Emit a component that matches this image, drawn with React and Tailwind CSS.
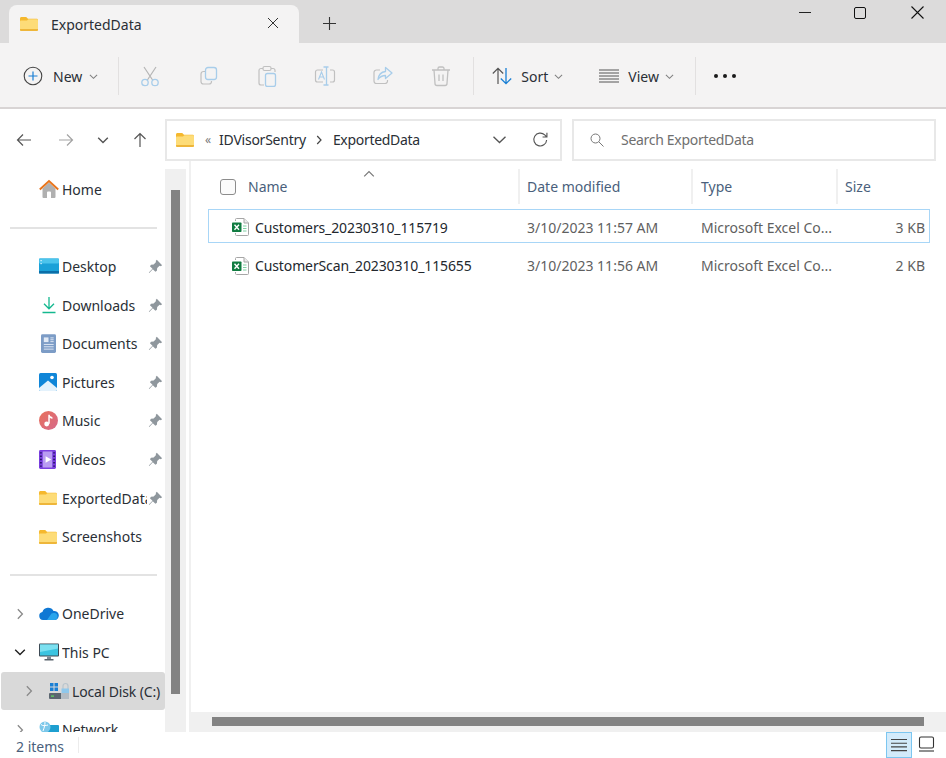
import React from "react";

const Folder = ({ className = "w-[18px] h-[18px]" }) => (
  <svg viewBox="0 0 18 16" className={className}>
    <path d="M0 2.500C0 1.600.6 1 1.500 1h4.200c.4 0 .7.1 1 .4L8 2.800h8.500c.9 0 1.500.6 1.500 1.500v9.200c0 .9-.6 1.500-1.500 1.500h-15C.6 15 0 14.400 0 13.500z" fill="#f5b82e" />
    <path d="M0 5.500C0 4.900.5 4.400 1 4.400h6l1.400-1.200h8.100c.9 0 1.500.6 1.500 1.500v8.800c0 .9-.6 1.500-1.500 1.500h-15C.6 15 0 14.400 0 13.500z" fill="#fddc78" />
    <path d="M0 13.500c0 .9.6 1.500 1.500 1.500h15c.9 0 1.500-.6 1.500-1.500V13H0z" fill="#eeb63a" />
  </svg>
);

const Chevron = ({ size = 10, color = "#808080", dir = "down", width = 1.2 }) => {
  const d = { down: "M1 3.200 5 7l4-3.800", right: "M3.200 1 7 5l-3.800 4", up: "M1 7l4-4 4 4" }[dir];
  return (
    <svg viewBox="0 0 10 10" width={size} height={size} className="shrink-0">
      <path d={d} fill="none" stroke={color} strokeWidth={width} />
    </svg>
  );
};

const Stroke = ({ size = 22, children, className = "shrink-0" }) => (
  <svg viewBox="0 0 22 22" width={size} height={size} className={className} fill="none">
    {children}
  </svg>
);

const CutIcon = () => (
  <Stroke>
    <path d="M5 2l8.600 13M17 2 8.400 15" stroke="#b5b5b5" strokeWidth="1.200" />
    <circle cx="6" cy="17.500" r="3.200" stroke="#a8cdea" strokeWidth="1.300" />
    <circle cx="16" cy="17.500" r="3.200" stroke="#a8cdea" strokeWidth="1.300" />
  </Stroke>
);

const CopyIcon = () => (
  <Stroke>
    <rect x="7.500" y="2.500" width="11" height="12" rx="2.500" stroke="#a8cdea" strokeWidth="1.300" />
    <path d="M7 6.500H5.500a2.500 2.500 0 0 0-2.500 2.500v7.500a2.500 2.500 0 0 0 2.500 2.500H11a2.500 2.500 0 0 0 2.500-2.500V16" stroke="#c0c0c0" strokeWidth="1.200" />
  </Stroke>
);

const PasteIcon = () => (
  <Stroke>
    <path d="M7 3.500H5a2 2 0 0 0-2 2V18a2 2 0 0 0 2 2h3M15 3.500h2a2 2 0 0 1 2 2V7" stroke="#c0c0c0" strokeWidth="1.200" />
    <rect x="7" y="1.500" width="8" height="4" rx="1.500" stroke="#c0c0c0" strokeWidth="1.200" />
    <rect x="9.500" y="8.500" width="10" height="13" rx="2" stroke="#a8cdea" strokeWidth="1.300" />
  </Stroke>
);

const RenameIcon = () => (
  <Stroke>
    <path d="M9 5H3.500A2 2 0 0 0 1.500 7v8a2 2 0 0 0 2 2H9M16 5h2.500a2 2 0 0 1 2 2v8a2 2 0 0 1-2 2H16" stroke="#c0c0c0" strokeWidth="1.200" />
    <path d="M9.500 2h5M9.500 20h5M12.500 2v18" stroke="#a8cdea" strokeWidth="1.300" />
    <path d="M4.500 14.500 7.500 7l3 7.500M5.500 12h4" stroke="#a8cdea" strokeWidth="1.100" />
  </Stroke>
);

const ShareIcon = () => (
  <Stroke>
    <path d="M8 5H4.500a2.500 2.500 0 0 0-2.500 2.500V16a2.500 2.500 0 0 0 2.500 2.500H13a2.500 2.500 0 0 0 2.500-2.500v-1" stroke="#c0c0c0" strokeWidth="1.200" />
    <path d="M13.500 2.500 20 8l-6.500 5.500V10.500c-3.500 0-5.500 1-7.500 4 .5-4.500 3-7.500 7.500-8z" stroke="#a8cdea" strokeWidth="1.300" strokeLinejoin="round" />
  </Stroke>
);

const TrashIcon = () => (
  <Stroke>
    <path d="M2 5h18M8 5V3.500A1.500 1.500 0 0 1 9.500 2h3A1.500 1.500 0 0 1 14 3.500V5M4 5l1 13.500a2 2 0 0 0 2 2h8a2 2 0 0 0 2-2L18 5M9 9.500v6.500M13 9.500v6.500" stroke="#c0c0c0" strokeWidth="1.300" />
  </Stroke>
);

const ToolbarBtn = ({ children, w = "w-[58px]" }) => (
  <div className={`flex items-center justify-center shrink-0 ${w}`}>{children}</div>
);

const Sep = ({ className = "" }) => <div className={`w-px h-[38px] bg-[#e2e0e0] shrink-0 ${className}`} />;

const HomeIcon = () => (
  <svg viewBox="0 0 20 20" width="20" height="20">
    <path d="M3.500 9.500V18a1 1 0 0 0 1 1h3.500v-5.500a1 1 0 0 1 1-1h2a1 1 0 0 1 1 1V19h3.500a1 1 0 0 0 1-1V9.500L10 3.500z" fill="#b0b0b0" />
    <path d="M.8 10.500 10 2l9.200 8.500" fill="none" stroke="#e8751c" strokeWidth="2" />
  </svg>
);

const DesktopIcon = () => (
  <svg viewBox="0 0 20 16" width="20" height="16">
    <rect x="0" y="0.500" width="20" height="15" rx="1" fill="#1ba1d8" />
    <rect x="0" y="0.500" width="20" height="5" rx="1" fill="#4cc4ec" />
    <rect x="0" y="13" width="20" height="2.500" fill="#0c6fa8" />
    <rect x="1.500" y="2" width="1.200" height="1.200" fill="#e6f7ff" />
    <rect x="1.500" y="5" width="1.200" height="1.200" fill="#e6f7ff" />
  </svg>
);

const DownloadIcon = () => (
  <svg viewBox="0 0 16 18" width="16" height="18">
    <path d="M8 1v11.500M3 7.800l5 5 5-5" fill="none" stroke="#14b88f" strokeWidth="1.300" />
    <path d="M1.500 16.500h13" stroke="#14b88f" strokeWidth="1.500" />
  </svg>
);

const DocsIcon = () => (
  <svg viewBox="0 0 16 20" width="15" height="19">
    <rect width="16" height="20" rx="1.500" fill="#7c9cc6" />
    <rect x="3" y="3.500" width="5" height="5" fill="#e2eaf5" />
    <path d="M10 4h3.500M10 6h3.500M10 8h3.500M3 11h10.500M3 13.500h10.500M3 16h10.500" stroke="#e2eaf5" strokeWidth="1" />
  </svg>
);

const PicturesIcon = () => (
  <svg viewBox="0 0 18 18" width="18" height="18">
    <rect width="18" height="18" rx="1.500" fill="#1086d8" />
    <path d="M0 15 9 7.500l9 7.500v1.500a1.500 1.500 0 0 1-1.500 1.500h-15A1.500 1.500 0 0 1 0 16.500z" fill="#e4f2fc" />
    <circle cx="13" cy="4.500" r="1.800" fill="#ffffff" />
  </svg>
);

const MusicIcon = () => (
  <svg viewBox="0 0 18 18" width="19" height="19">
    <defs>
      <linearGradient id="musicFill" x1="0" y1="0" x2="1" y2="1">
        <stop offset="0" stopColor="#e8705a" />
        <stop offset="1" stopColor="#d66a8c" />
      </linearGradient>
    </defs>
    <circle cx="9" cy="9" r="9" fill="url(#musicFill)" />
    <path d="M9.500 3.500v8.500" stroke="#fff" strokeWidth="1.400" />
    <path d="M9.500 3.500c1 1.600 2.500 1.800 3.200 2.200v1.900c-1.200-.3-2.400-.9-3.200-1.600z" fill="#fff" />
    <circle cx="7.300" cy="12.300" r="2.300" fill="#fff" />
  </svg>
);

const VideosIcon = () => (
  <svg viewBox="0 0 18 20" width="17" height="19">
    <rect width="18" height="20" rx="1.500" fill="#7b3fe0" />
    <path d="M1 3h2M1 6.500h2M1 10h2M1 13.500h2M1 17h2M15 3h2M15 6.500h2M15 10h2M15 13.500h2M15 17h2" stroke="#2c1670" strokeWidth="1.500" />
    <rect x="4" y="1.500" width="10" height="17" fill="#b99cf2" />
    <path d="M7 6.500v7l6-3.500z" fill="#fff" />
  </svg>
);

const OneDriveIcon = () => (
  <svg viewBox="0 0 20 13" width="20" height="13">
    <path d="M4 13a4 4 0 0 1-.6-7.900A6 6 0 0 1 14.500 4a4.500 4.500 0 0 1 1.500 9z" fill="#0f78d4" />
    <path d="M8 13l4.500-6.500a4 4 0 0 1 3-.5 3.600 3.600 0 0 1 .5 7z" fill="#2aa5ec" />
  </svg>
);

const PcIcon = () => (
  <svg viewBox="0 0 20 18" width="20" height="18">
    <rect x="0" y="0.500" width="20" height="13" rx="1" fill="#3d4a55" />
    <rect x="1" y="1.500" width="18" height="11" fill="#3cc4e0" />
    <path d="M1 1.500h18v4L1 9z" fill="#7ce0f0" />
    <rect x="8" y="13.500" width="4" height="2.500" fill="#7e8a94" />
    <rect x="5.500" y="16" width="9" height="1.500" fill="#59636c" />
  </svg>
);

const DiskIcon = () => (
  <svg viewBox="0 0 20 18" width="20" height="18">
    <rect x="1" y="1" width="3.500" height="3.500" fill="#1a7fd4" />
    <rect x="5.500" y="1" width="3.500" height="3.500" fill="#1a7fd4" />
    <rect x="1" y="5.500" width="3.500" height="3.500" fill="#1a7fd4" />
    <rect x="5.500" y="5.500" width="3.500" height="3.500" fill="#1a7fd4" />
    <path d="M14 7V4a2.500 2.500 0 0 1 5 0v3" fill="none" stroke="#b8c4cc" strokeWidth="1.200" />
    <rect x="12.500" y="6.500" width="7.500" height="5" fill="#8fc8ec" />
    <rect x="0" y="11" width="20" height="6" rx="1" fill="#5b6670" />
    <rect x="12" y="11" width="8" height="6" fill="#b4bcc3" />
    <rect x="2" y="13.500" width="3" height="1.200" fill="#5fe05f" />
  </svg>
);

const NetworkIcon = () => (
  <svg viewBox="0 0 20 18" width="20" height="18">
    <rect x="4" y="4" width="16" height="12" rx="1" fill="#1e9fd0" />
    <circle cx="6" cy="6" r="5.500" fill="#7cc8ea" />
    <path d="M2 3.500c2 2 5 1 7 .5M4 10c1-3 2-5 2-9" stroke="#fff" strokeWidth="1" fill="none" />
  </svg>
);

const PinIcon = () => (
  <svg viewBox="0 0 14 14" width="15" height="15">
    <path d="M8.200.8 13.200 5.800 11.800 6.700 10.800 6.300 8.600 8.500 8.300 11 6.900 12 4.500 9.500 1.200 13 .8 12.600 4.200 9.200 1.800 6.800 2.800 5.400 5.300 5.100 7.500 2.900 7.200 1.900z" fill="#8f979d" />
  </svg>
);

const ExcelIcon = () => (
  <svg viewBox="0 0 17 18" width="17" height="18" className="shrink-0">
    <path d="M3.500 3V1.500a1 1 0 0 1 1-1h7.500l4.500 4.500v11.500a1 1 0 0 1-1 1h-11a1 1 0 0 1-1-1V15" fill="#fff" stroke="#a6a6a6" strokeWidth="1" />
    <path d="M12 .5v4.500h4.500" fill="#ececec" stroke="#a6a6a6" strokeWidth="1" />
    <rect x="0" y="4.500" width="9.500" height="9.500" rx="0.800" fill="#107c41" />
    <path d="M2.500 6.800 7 11.800M7 6.800 2.500 11.800" stroke="#fff" strokeWidth="1.400" />
    <path d="M11 8h3.500M11 10.500h3.500M11 13h3.500" stroke="#7fd0a4" strokeWidth="1.200" />
  </svg>
);

function NavRow({ icon, label, pinned, arrow, indent = "pl-0", active, labelW = "w-[85px]" }) {
  return (
    <div className={`flex items-center h-[38.6px] shrink-0 rounded-[3px] ${indent} ${active ? "bg-[#d9d9d9] ml-px" : ""}`}>
      <div className={`${active ? "w-[40px]" : "w-[39px]"} shrink-0 flex justify-center`}>
        {arrow === "right" && <Chevron size={12} dir="right" color="#8a8a8a" width={1.1} />}
        {arrow === "down" && <Chevron size={12} dir="down" color="#222222" width={1.2} />}
      </div>
      <div className="w-[23px] shrink-0 flex items-center">{icon}</div>
      <div className={`${labelW} overflow-hidden whitespace-nowrap ${active ? "tracking-[-0.15px]" : ""}`}>{label}</div>
      {pinned && <div className="ml-px"><PinIcon /></div>}
    </div>
  );
}

const NavSep = () => (
  <div className="h-[38.6px] shrink-0 flex items-center pl-[10px]">
    <div className="w-[147px] h-[2px] bg-[#e3e3e3]" />
  </div>
);

const files = [
  { name: "Customers_20230310_115719", date: "3/10/2023 11:57 AM", size: "3 KB", selected: true },
  { name: "CustomerScan_20230310_115655", date: "3/10/2023 11:56 AM", size: "2 KB" },
];

export default function App() {
  return (
    <div className="w-[946px] h-[758px] overflow-hidden bg-white flex flex-col font-['Noto_Sans',sans-serif] text-[14px] text-[#2a2f36]">
      {/* title bar */}
      <div className="h-[43px] shrink-0 bg-[#dcdbdb] flex items-end pl-[9px]">
        <div className="w-[290px] h-[38px] bg-[#f4f3f3] rounded-t-[8px] flex items-center pl-[11px] pr-[20px]">
          <Folder />
          <span className="ml-[13px] flex-1">ExportedData</span>
          <svg viewBox="0 0 12 12" width="12" height="12" className="mb-[2px]">
            <path d="M1 1l10 10M11 1 1 11" stroke="#333" strokeWidth="1" />
          </svg>
        </div>
        <div className="ml-[24px] mb-[13px]">
          <svg viewBox="0 0 13 13" width="13" height="13">
            <path d="M6.500 0v13M0 6.500h13" stroke="#333" strokeWidth="1.100" />
          </svg>
        </div>
        <div className="ml-auto self-start flex items-center pt-[6px] pr-[22px]">
          <div className="w-[12px] h-px bg-[#222] mr-[43px]" />
          <div className="w-[12px] h-[12px] border border-[#111] rounded-[2px] mr-[45px]" />
          <svg viewBox="0 0 13 13" width="13" height="13">
            <path d="M.5.500l12 12M12.500.500l-12 12" stroke="#111" strokeWidth="1.100" />
          </svg>
        </div>
      </div>

      {/* command bar */}
      <div className="h-[66px] shrink-0 bg-[#f4f3f3] border-b-2 border-[#d8d4d4] flex items-center pl-[23px] pt-[2px]">
        <svg viewBox="0 0 20 20" width="20" height="20" className="shrink-0">
          <circle cx="10" cy="10" r="8.800" fill="none" stroke="#444" strokeWidth="1.100" />
          <path d="M10 5.500v9M5.500 10h9" stroke="#1a7fd4" strokeWidth="1.200" />
        </svg>
        <span className="ml-[10px]">New</span>
        <div className="ml-[7px]"><Chevron size={9} /></div>
        <Sep className="ml-[20px]" />
        <ToolbarBtn w="w-[61px]"><CutIcon /></ToolbarBtn>
        <ToolbarBtn><CopyIcon /></ToolbarBtn>
        <ToolbarBtn><PasteIcon /></ToolbarBtn>
        <ToolbarBtn><RenameIcon /></ToolbarBtn>
        <ToolbarBtn><ShareIcon /></ToolbarBtn>
        <ToolbarBtn><TrashIcon /></ToolbarBtn>
        <Sep className="ml-[3px]" />
        <svg viewBox="0 0 20 20" width="20" height="20" className="ml-[18px] shrink-0">
          <path d="M6 18V2.500M.8 7.500 6 2.300l5.200 5.200" fill="none" stroke="#555" strokeWidth="1.200" />
          <path d="M14 2v15.500M8.800 12.500 14 17.700l5.200-5.200" fill="none" stroke="#1a7fd4" strokeWidth="1.300" />
        </svg>
        <span className="ml-[9px]">Sort</span>
        <div className="ml-[6px]"><Chevron size={9} /></div>
        <svg viewBox="0 0 20 14" width="20" height="14" className="ml-[36px] shrink-0">
          <path d="M0 1h20M0 4h20M0 7h20M0 10h20M0 13h20" stroke="#555" strokeWidth="1" />
        </svg>
        <span className="ml-[9px]">View</span>
        <div className="ml-[6px]"><Chevron size={9} /></div>
        <Sep className="ml-[21px]" />
        <div className="ml-[18px] flex gap-[5px]">
          <div className="w-[4px] h-[4px] rounded-full bg-[#1a1a1a]" />
          <div className="w-[4px] h-[4px] rounded-full bg-[#1a1a1a]" />
          <div className="w-[4px] h-[4px] rounded-full bg-[#1a1a1a]" />
        </div>
      </div>

      {/* address row */}
      <div className="h-[52px] shrink-0 flex items-center pl-[16px] pt-[9px]">
        <svg viewBox="0 0 16 16" width="16" height="16" className="shrink-0">
          <path d="M15 8H1.500M7 2.500 1.500 8 7 13.500" fill="none" stroke="#555" strokeWidth="1.200" />
        </svg>
        <svg viewBox="0 0 16 16" width="16" height="16" className="ml-[26px] shrink-0">
          <path d="M1 8h13.500M9 2.500 14.500 8 9 13.500" fill="none" stroke="#a3a3a3" strokeWidth="1.200" />
        </svg>
        <div className="ml-[23px]"><Chevron size={12} color="#555" /></div>
        <svg viewBox="0 0 16 16" width="16" height="16" className="ml-[23px] shrink-0">
          <path d="M8 15V1.500M2.500 7 8 1.500 13.500 7" fill="none" stroke="#555" strokeWidth="1.200" />
        </svg>
        <div className="ml-[17px] w-[397px] h-[42px] border-2 border-[#e8e8e8] flex items-center pl-[9px] pr-[11px]">
          <Folder />
          <span className="ml-[11px] text-[#777] text-[12px] leading-none">«</span>
          <span className="ml-[8px] tracking-[-0.25px]">IDVisorSentry</span>
          <div className="ml-[8px]"><Chevron size={10} color="#444" dir="right" /></div>
          <span className="ml-[9px] tracking-[-0.3px]">ExportedData</span>
          <div className="ml-auto flex items-center gap-[25px]">
            <Chevron size={15} color="#555" width={0.9} />
            <svg viewBox="0 0 18 18" width="17" height="17">
              <path d="M15.500 9.500a6.800 6.800 0 1 1-2-5.300l2 2M15.800 1.800v4.600h-4.600" fill="none" stroke="#555" strokeWidth="1.200" />
            </svg>
          </div>
        </div>
        <div className="ml-[10px] w-[364px] h-[42px] border-2 border-[#e8e8e8] flex items-center pl-[16px] text-[#6f6f6f]">
          <svg viewBox="0 0 14 14" width="14" height="14" className="shrink-0">
            <circle cx="5.500" cy="5.500" r="4.500" fill="none" stroke="#777" strokeWidth="1" />
            <path d="M8.800 8.800 13.500 13.500" stroke="#777" strokeWidth="1" />
          </svg>
          <span className="ml-[17px] tracking-[-0.3px]">Search ExportedData</span>
        </div>
      </div>

      {/* body */}
      <div className="h-[571px] shrink-0 flex overflow-hidden">
        <div className="w-[165px] shrink-0 pt-[9px] overflow-hidden flex flex-col">
          <NavRow icon={<HomeIcon />} label="Home" />
          <NavSep />
          <NavRow icon={<DesktopIcon />} label="Desktop" pinned />
          <NavRow icon={<div className="pl-[2px]"><DownloadIcon /></div>} label="Downloads" pinned />
          <NavRow icon={<div className="pl-[2px]"><DocsIcon /></div>} label="Documents" pinned />
          <NavRow icon={<PicturesIcon />} label="Pictures" pinned />
          <NavRow icon={<MusicIcon />} label="Music" pinned />
          <NavRow icon={<VideosIcon />} label="Videos" pinned />
          <NavRow icon={<Folder />} label="ExportedData" pinned />
          <NavRow icon={<Folder />} label="Screenshots" labelW="w-[100px]" />
          <NavSep />
          <NavRow icon={<OneDriveIcon />} label="OneDrive" arrow="right" labelW="w-[100px]" />
          <NavRow icon={<PcIcon />} label="This PC" arrow="down" labelW="w-[100px]" />
          <NavRow icon={<DiskIcon />} label="Local Disk (C:)" arrow="right" indent="pl-[8px]" active labelW="w-[93px]" />
          <NavRow icon={<NetworkIcon />} label="Network" arrow="right" labelW="w-[100px]" />
        </div>

        {/* nav scrollbar */}
        <div className="w-[21px] shrink-0 mt-[8px] bg-[#f0f0f0] pt-[21px] pl-[6px]">
          <div className="w-[9px] h-[504px] bg-[#838383]" />
        </div>
        <div className="w-[3px] shrink-0" />

        {/* file list */}
        <div className="flex-1 border-l-2 border-[#f0f0f0] flex flex-col min-w-0 pt-[8px]">
          <div className="h-[35px] shrink-0 ml-[17px] grid grid-cols-[310px_173px_145px_97px] text-[#4a5f7c]">
            <div className="relative flex items-center pl-[12px]">
              <div className="w-[16px] h-[16px] rounded-[3px] border border-[#8c8c8c] bg-[#fbfbfb]" />
              <span className="ml-[12px]">Name</span>
              <div className="absolute left-[155px] top-[-1px]"><Chevron size={12} color="#777" dir="up" width={1} /></div>
            </div>
            <div className="border-l-2 border-[#f0f0f0] pl-[7px] flex items-center">Date modified</div>
            <div className="border-l-2 border-[#f0f0f0] pl-[8px] flex items-center">Type</div>
            <div className="border-l-2 border-[#f0f0f0] pl-[7px] flex items-center">Size</div>
          </div>
          <div className="ml-[17px] w-[722px] flex flex-col gap-[5px] mt-[5px]">
            {files.map((file) => (
              <div
                key={file.name}
                className={`h-[33.5px] pt-[3px] grid grid-cols-[311px_173px_145px_1fr] items-center border ${file.selected ? "border-[#a8d6f7]" : "border-transparent"}`}
              >
                <div className="flex items-center pl-[23px] text-[#23282e] whitespace-nowrap">
                  <ExcelIcon />
                  <span className="ml-[6px] tracking-[-0.12px]">{file.name}</span>
                </div>
                <div className="pl-[7px] text-[#5f5f5f] whitespace-nowrap">{file.date}</div>
                <div className="pl-[8px] text-[#5f5f5f] whitespace-nowrap">Microsoft Excel Co...</div>
                <div className="text-right pr-[4px] text-[#5f5f5f] whitespace-nowrap">{file.size}</div>
              </div>
            ))}
          </div>
          <div className="mt-auto h-[20px] bg-[#f0f0f0] pl-[21px] pt-[5px]">
            <div className="w-[712px] h-[9px] bg-[#838383]" />
          </div>
        </div>
      </div>

      {/* status bar */}
      <div className="flex-1 flex items-center pl-[16px] text-[#4a5f7c] relative">
        <span className="pt-[2px]">2 items</span>
        <div className="ml-[14px] w-px h-[16px] bg-[#ececec]" />
        <div className="ml-auto flex items-center pr-[11px] self-stretch">
          <div className="w-[26px] h-[26px] bg-[#d3ebfb] border border-[#7cc6f0] flex items-center justify-center">
            <svg viewBox="0 0 16 14" width="16" height="14">
              <path d="M0 1.500h16M0 5.200h16M0 8.900h16M0 12.600h16" stroke="#444" strokeWidth="1.100" />
            </svg>
          </div>
          <div className="ml-[6px] w-[17px]">
            <svg viewBox="0 0 17 18" width="17" height="18">
              <rect x="1.500" y="1" width="14" height="11" rx="1.500" fill="none" stroke="#333" strokeWidth="1.100" />
              <path d="M1 15h15" stroke="#333" strokeWidth="1.100" />
            </svg>
          </div>
        </div>
      </div>
    </div>
  );
}
